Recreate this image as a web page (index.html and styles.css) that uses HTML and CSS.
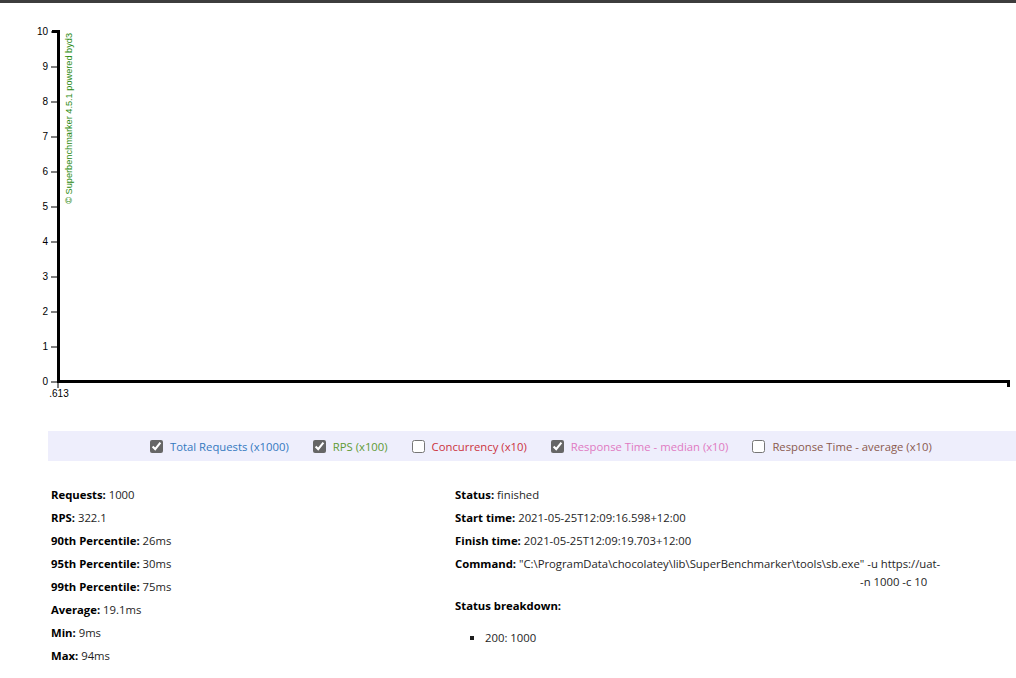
FILE: index.html
```html
<!DOCTYPE html>
<html>
<head>
<meta charset="utf-8">
<link rel="stylesheet" href="styles.css">
</head>
<body>
<div class="topbar"></div>
<svg class="chart" width="1016" height="428" viewBox="0 0 1016 428">
  <g class="y-axis">
    <g class="ticks">
      <line x1="51" x2="57" y1="29" y2="29"/>
      <line x1="51" x2="57" y1="64" y2="64"/>
      <line x1="51" x2="57" y1="99" y2="99"/>
      <line x1="51" x2="57" y1="134" y2="134"/>
      <line x1="51" x2="57" y1="169" y2="169"/>
      <line x1="51" x2="57" y1="204" y2="204"/>
      <line x1="51" x2="57" y1="239" y2="239"/>
      <line x1="51" x2="57" y1="274" y2="274"/>
      <line x1="51" x2="57" y1="309" y2="309"/>
      <line x1="51" x2="57" y1="344" y2="344"/>
      <line x1="51" x2="57" y1="379" y2="379"/>
      <line x1="58" x2="58" y1="379" y2="385"/>
    </g>
    <g class="labels">
      <text x="48" y="29" dy="0.32em">10</text>
      <text x="48" y="64" dy="0.32em">9</text>
      <text x="48" y="99" dy="0.32em">8</text>
      <text x="48" y="134" dy="0.32em">7</text>
      <text x="48" y="169" dy="0.32em">6</text>
      <text x="48" y="204" dy="0.32em">5</text>
      <text x="48" y="239" dy="0.32em">4</text>
      <text x="48" y="274" dy="0.32em">3</text>
      <text x="48" y="309" dy="0.32em">2</text>
      <text x="48" y="344" dy="0.32em">1</text>
      <text x="48" y="379" dy="0.32em">0</text>
    </g>
    <text class="x-label" x="59" y="394">.613</text>
    <path class="domain" d="M52,28.5 H58.5 V378.5 H1008.5 V384"/>
  </g>
  <text class="watermark" transform="translate(72,30) rotate(-90)">© Superbenchmarker 4.5.1 powered byd3</text>
</svg>

<div class="legend">
  <label class="legend-item"><input type="checkbox" checked><span class="c-total">Total Requests (x1000)</span></label>
  <label class="legend-item"><input type="checkbox" checked><span class="c-rps">RPS (x100)</span></label>
  <label class="legend-item"><input type="checkbox"><span class="c-conc">Concurrency (x10)</span></label>
  <label class="legend-item"><input type="checkbox" checked><span class="c-median">Response Time - median (x10)</span></label>
  <label class="legend-item"><input type="checkbox"><span class="c-avg">Response Time - average (x10)</span></label>
</div>

<div class="stats">
  <div class="col">
    <p class="stat"><b>Requests:</b> 1000</p>
    <p class="stat"><b>RPS:</b> 322.1</p>
    <p class="stat"><b>90th Percentile:</b> 26ms</p>
    <p class="stat"><b>95th Percentile:</b> 30ms</p>
    <p class="stat"><b>99th Percentile:</b> 75ms</p>
    <p class="stat"><b>Average:</b> 19.1ms</p>
    <p class="stat"><b>Min:</b> 9ms</p>
    <p class="stat"><b>Max:</b> 94ms</p>
  </div>
  <div class="col">
    <p class="stat"><b>Status:</b> finished</p>
    <p class="stat"><b>Start time:</b> 2021-05-25T12:09:16.598+12:00</p>
    <p class="stat"><b>Finish time:</b> 2021-05-25T12:09:19.703+12:00</p>
    <p class="stat"><b>Command:</b> "C:\ProgramData\chocolatey\lib\SuperBenchmarker\tools\sb.exe" -u https://uat-<span class="cmd-cont">-n 1000 -c 10</span></p>
    <p class="stat breakdown-title"><b>Status breakdown:</b></p>
    <ul class="breakdown">
      <li>200: 1000</li>
    </ul>
  </div>
</div>
</body>
</html>
```

FILE: styles.css
```css
html, body {
  margin: 0;
  padding: 0;
  background: #ffffff;
}

body {
  font-family: "Open Sans", "Noto Sans", sans-serif;
  font-size: 11.3px;
  color: #1e1e1e;
}

.topbar {
  height: 3px;
  background: #3d3d3d;
}

.chart {
  display: block;
}

.chart .ticks line {
  stroke: #000;
  stroke-width: 1;
}

.chart .labels text {
  font-family: "Liberation Sans", Arial, sans-serif;
  font-size: 10px;
  text-anchor: end;
  fill: #000;
}

.chart .x-label {
  font-family: "Liberation Sans", Arial, sans-serif;
  font-size: 10px;
  text-anchor: middle;
  fill: #000;
}

.chart .domain {
  fill: none;
  stroke: #000;
  stroke-width: 3;
}

.chart .watermark {
  font-family: "Liberation Sans", Arial, sans-serif;
  font-size: 9.2px;
  text-anchor: end;
  fill: #2a8a10;
}

.legend {
  margin-left: 48px;
  height: 30px;
  box-sizing: border-box;
  padding-top: 1px;
  background: #eeeefc;
  display: flex;
  align-items: center;
  padding-left: 99px;
  gap: 21px;
}

.legend-item {
  display: flex;
  align-items: center;
  gap: 7px;
}

.legend-item input {
  margin: 0 0 0 3px;
  width: 13px;
  height: 13px;
  accent-color: #666666;
}

.c-total { color: #3479bf; }
.c-rps { color: #5e9a34; }
.c-conc { color: #cc3340; }
.c-median { color: #e07ac2; }
.c-avg { color: #8a5a4e; }

.stats {
  display: grid;
  grid-template-columns: 404px 1fr;
  padding: 25px 0 0 51px;
}

.stat {
  margin: 0 0 5px;
  line-height: 18px;
}

.stat b {
  color: #000;
}

.cmd-cont {
  display: block;
  padding-left: 405px;
}

.breakdown-title {
  margin-top: 6px;
}

.breakdown {
  margin: 14px 0 0;
  padding-left: 30px;
  list-style: square;
  line-height: 18px;
}
```
